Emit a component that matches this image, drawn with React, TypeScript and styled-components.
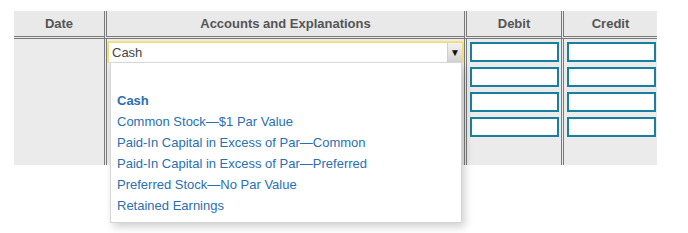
import React from 'react'
import styled, { createGlobalStyle } from 'styled-components'

const GlobalStyle = createGlobalStyle`
  html, body {
    margin: 0;
    min-height: 100%;
    background: #ffffff;
    font-family: "Liberation Sans", Arial, sans-serif;
  }
`

const accounts = [
  '',
  'Cash',
  'Common Stock\u2014$1 Par Value',
  'Paid-In Capital in Excess of Par\u2014Common',
  'Paid-In Capital in Excess of Par\u2014Preferred',
  'Preferred Stock\u2014No Par Value',
  'Retained Earnings',
]

const Page = styled.div`
  padding: 11px 0 0 14px;
  min-height: 233px;
  box-sizing: border-box;
`

const Table = styled.div`
  display: grid;
  grid-template-columns: 90px 360px 97px 96px;
  grid-template-rows: 28px 126px;
  width: 643px;
  background: #ebebeb;
`

const HeadCell = styled.div<{ $first?: boolean }>`
  border-left: ${p => (p.$first ? 'none' : '3px double #7a7a7a')};
  border-bottom: 3px double #7a7a7a;
  background: #e9e9e9;
  color: #555555;
  font-size: 13px;
  font-weight: bold;
  text-align: center;
  line-height: 25px;
`

const BodyCell = styled.div<{ $first?: boolean }>`
  border-left: ${p => (p.$first ? 'none' : '3px double #7a7a7a')};
  padding: 3px 2px 0 3px;
  display: flex;
  flex-direction: column;
  gap: 5px;
`

const SelectWrap = styled.div`
  position: relative;
  z-index: 5;
  margin-left: -2px;
  width: 355px;
`

const SelectBox = styled.div`
  height: 21px;
  box-sizing: border-box;
  border: 1px solid #f2dc78;
  border-bottom-color: #dddddd;
  background: #ffffff;
  display: flex;
  align-items: center;
  justify-content: space-between;
  padding-left: 3px;
  font-size: 13px;
  color: #444444;
  box-shadow: -1px 0 0 #f5e08a, 1px 0 0 #f5e08a, 0 -1px 0 #f5e08a;
`

const ArrowButton = styled.div`
  width: 14px;
  height: 19px;
  background: linear-gradient(#f2f2f2, #d3d3d3);
  border-left: 1px solid #d0d0d0;
  display: flex;
  align-items: center;
  justify-content: center;
  font-size: 10px;
  color: #111111;
`

const DropList = styled.ul`
  position: absolute;
  top: 21px;
  left: 2px;
  width: 352px;
  margin: 0;
  padding: 6px 0;
  list-style: none;
  background: #ffffff;
  border: 1px solid #d4d4d4;
  border-top: none;
  box-sizing: border-box;
  box-shadow: 3px 4px 8px rgba(0, 0, 0, 0.18);
`

const DropItem = styled.li<{ $selected?: boolean }>`
  height: 21px;
  line-height: 21px;
  padding-left: 6px;
  font-size: 13px;
  color: #2a6fb0;
  white-space: nowrap;
  font-weight: ${p => (p.$selected ? 'bold' : 'normal')};
`

const AmountInput = styled.div`
  width: 89px;
  height: 20px;
  box-sizing: border-box;
  border: 2px solid #16809e;
  background: #ffffff;
`

export default function App() {
  const rows = [0, 1, 2, 3]
  return (
    <Page>
      <GlobalStyle />
      <Table>
        <HeadCell $first>Date</HeadCell>
        <HeadCell>Accounts and Explanations</HeadCell>
        <HeadCell>Debit</HeadCell>
        <HeadCell>Credit</HeadCell>

        <BodyCell $first />
        <BodyCell>
          <SelectWrap>
            <SelectBox>
              <span>Cash</span>
              <ArrowButton>&#9660;</ArrowButton>
            </SelectBox>
            <DropList>
              {accounts.map((name, i) => (
                <DropItem key={i} $selected={name === 'Cash'}>
                  {name || '\u00a0'}
                </DropItem>
              ))}
            </DropList>
          </SelectWrap>
        </BodyCell>
        <BodyCell>
          {rows.map(r => (
            <AmountInput key={r} />
          ))}
        </BodyCell>
        <BodyCell>
          {rows.map(r => (
            <AmountInput key={r} />
          ))}
        </BodyCell>
      </Table>
    </Page>
  )
}
